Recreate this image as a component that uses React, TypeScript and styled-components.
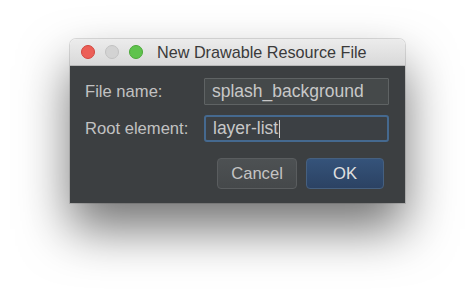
import React from "react";
import styled, { createGlobalStyle } from "styled-components";

const Global = createGlobalStyle`
  html, body { margin: 0; padding: 0; background: #ffffff; }
  body { font-family: "Liberation Sans", Arial, sans-serif; }
`;

const Page = styled.div`
  width: 474px;
  height: 302px;
  background: #ffffff;
  padding: 39px 0 0 70px;
  box-sizing: border-box;
  overflow: hidden;
`;

const Window = styled.div`
  width: 335px;
  height: 164px;
  display: flex;
  flex-direction: column;
  border-radius: 6px 6px 0 0;
  overflow: hidden;
  box-shadow: 0 26px 50px rgba(0, 0, 0, 0.55), 0 0 0 1px rgba(0, 0, 0, 0.12);
`;

const TitleBar = styled.div`
  height: 27px;
  flex: none;
  display: flex;
  align-items: center;
  padding-left: 11px;
  background: linear-gradient(#ececec, #d9d9d9);
  border-bottom: 1px solid #b8b8b8;
  box-sizing: border-box;
`;

const Light = styled.span<{ $c: string; $b: string }>`
  width: 14px;
  height: 14px;
  border-radius: 50%;
  background: ${(p) => p.$c};
  border: 1px solid ${(p) => p.$b};
  box-sizing: border-box;
  margin-right: 10px;
`;

const Title = styled.div`
  margin-left: 4px;
  font-size: 16.2px;
  color: #3a3a3a;
`;

const Body = styled.div`
  flex: 1;
  background: #3c3f41;
  padding: 12px 16px 15px 15px;
  display: flex;
  flex-direction: column;
`;

const Row = styled.div`
  display: flex;
  align-items: center;
  height: 27px;
  margin-bottom: 10px;
`;

const Label = styled.div`
  width: 119px;
  font-size: 16.6px;
  color: #c2c2c2;
`;

const Field = styled.div<{ $focus?: boolean }>`
  width: 185px;
  height: 27px;
  box-sizing: border-box;
  display: flex;
  align-items: center;
  padding-left: 7px;
  font-size: 17.5px;
  color: #c8c8c8;
  background: ${(p) => (p.$focus ? "#3c4044" : "#45494a")};
  border: ${(p) => (p.$focus ? "2px solid #45698f" : "1px solid #5f6364")};
  border-radius: ${(p) => (p.$focus ? "3px" : "1px")};
`;

const Caret = styled.span`
  display: inline-block;
  width: 1px;
  height: 18px;
  background: #d0d0d0;
  margin-left: 1px;
`;

const Buttons = styled.div`
  display: flex;
  justify-content: flex-end;
  gap: 9px;
  margin-top: 6px;
  padding-right: 5px;
`;

const Button = styled.div<{ $primary?: boolean; $w: number }>`
  width: ${(p) => p.$w}px;
  height: 31px;
  box-sizing: border-box;
  display: flex;
  align-items: center;
  justify-content: center;
  font-size: 16.6px;
  color: ${(p) => (p.$primary ? "#e0e0e0" : "#c4c4c4")};
  border-radius: 4px;
  background: ${(p) =>
    p.$primary
      ? "linear-gradient(#35537a, #2b4263)"
      : "linear-gradient(#4d5153, #45484a)"};
  border: 1px solid ${(p) => (p.$primary ? "#46607f" : "#5a5d5f")};
`;

export default function App() {
  return (
    <>
      <Global />
      <Page>
        <Window>
          <TitleBar>
            <Light $c="#ec5f57" $b="#d2463e" />
            <Light $c="#d3d3d3" $b="#c2c2c2" />
            <Light $c="#5fc34d" $b="#4aa838" />
            <Title>New Drawable Resource File</Title>
          </TitleBar>
          <Body>
            <Row>
              <Label>File name:</Label>
              <Field>splash_background</Field>
            </Row>
            <Row>
              <Label>Root element:</Label>
              <Field $focus>
                layer-list
                <Caret />
              </Field>
            </Row>
            <Buttons>
              <Button $w={80}>Cancel</Button>
              <Button $w={78} $primary>
                OK
              </Button>
            </Buttons>
          </Body>
        </Window>
      </Page>
    </>
  );
}
